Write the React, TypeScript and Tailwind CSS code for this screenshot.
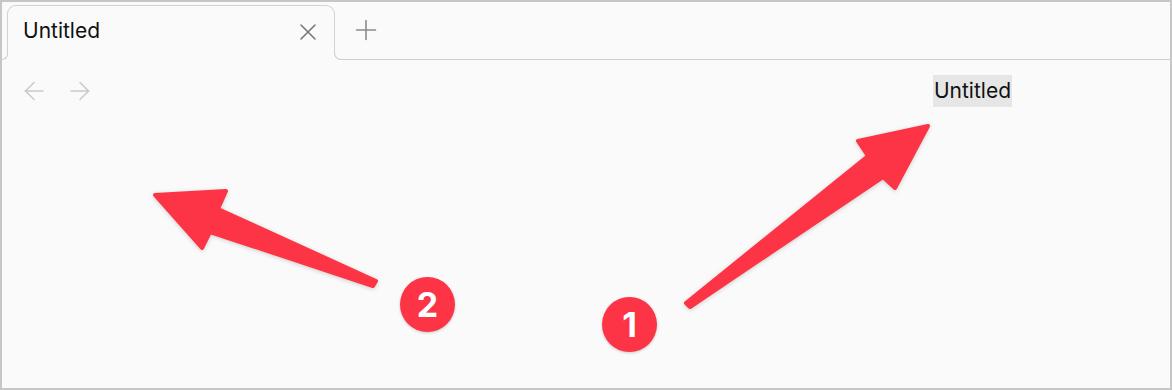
import React from "react";

const RED = "#fc3445";

function CloseIcon() {
  return (
    <svg width="18" height="18" viewBox="0 0 18 18" fill="none" stroke="#787878" strokeWidth="1.6" strokeLinecap="round">
      <path d="M2 2l14 14M16 2L2 16" />
    </svg>
  );
}

function PlusIcon() {
  return (
    <svg width="22" height="22" viewBox="0 0 22 22" fill="none" stroke="#8c8c8c" strokeWidth="1.6" strokeLinecap="round">
      <path d="M11 1.5v19M1.5 11h19" />
    </svg>
  );
}

function NavArrow({ dir }: { dir: "left" | "right" }) {
  return (
    <svg width="20" height="20" viewBox="0 0 20 20" fill="none" stroke="#cacaca" strokeWidth="1.5" strokeLinecap="round" strokeLinejoin="round">
      {dir === "left" ? (
        <path d="M19 10H1M10 1.5L1.5 10 10 18.5" />
      ) : (
        <path d="M1 10h18M10 1.5l8.5 8.5-8.5 8.5" />
      )}
    </svg>
  );
}

// Annotation overlay: two red callout arrows
function Arrows() {
  return (
    <svg
      className="pointer-events-none absolute left-0 top-0 drop-shadow-[0_1px_2px_rgba(0,0,0,0.18)]"
      width="1172"
      height="390"
      viewBox="0 0 1172 390"
    >
      <polygon
        points="686,303 868,156 858,141 928,126 895,188 883,177 690,307"
        fill={RED}
        stroke={RED}
        strokeWidth="4"
        strokeLinejoin="round"
      />
      <polygon
        points="376,281 218,209 226,191 155,195 202,248 210,232 373,286"
        fill={RED}
        stroke={RED}
        strokeWidth="4"
        strokeLinejoin="round"
      />
    </svg>
  );
}

function Badge({ n, className }: { n: string; className: string }) {
  return (
    <div
      className={`absolute flex h-[55px] w-[55px] items-center justify-center rounded-full bg-[#fc3445] text-[34px] font-bold leading-none text-white shadow-[0_1px_3px_rgba(0,0,0,0.2)] ${className}`}
    >
      {n}
    </div>
  );
}

export default function App() {
  return (
    <div
      className="relative h-[390px] w-[1172px] overflow-hidden"
      style={{ fontFamily: "Inter, 'Noto Sans', sans-serif" }}
    >
      <div className="flex h-full w-full flex-col border-2 border-[#c6c6c6] bg-[#fafafa]">
        {/* Tab strip */}
        <div className="flex h-[58px] shrink-0">
          <div className="-mr-px h-[8px] w-[6px] self-end rounded-br-[7px] border-b border-r border-[#cdcdcd]" />
          <div className="mt-[3px] flex h-[47px] w-[328px] items-start justify-between rounded-t-[9px] border-l border-r border-t border-[#d2d2d2] pl-[15px] pr-[17px] pt-[11px]">
            <span className="text-[21px] leading-[28px] text-[#111]">Untitled</span>
            <span className="mt-[6px]">
              <CloseIcon />
            </span>
          </div>
          <div className="-ml-px flex flex-1 flex-col">
            <div className="flex h-[50px] items-start pl-[21px] pt-[17px]">
              <PlusIcon />
            </div>
            <div className="h-[8px] rounded-bl-[7px] border-b border-l border-[#cdcdcd]" />
          </div>
        </div>

        {/* Navigation row */}
        <div className="flex h-[62px] items-center pl-[22px] pr-[158px]">
          <div className="flex items-center gap-[26px]">
            <NavArrow dir="left" />
            <NavArrow dir="right" />
          </div>
          <div className="flex flex-1 justify-end">
            <span className="flex h-[32px] items-center bg-[#e6e6e6] px-[1px] text-[21px] text-[#111]">
              Untitled
            </span>
          </div>
        </div>

        <div className="flex-1" />
      </div>

      <Arrows />
      <Badge n="2" className="left-[400px] top-[277px]" />
      <Badge n="1" className="left-[602px] top-[297px]" />
    </div>
  );
}
